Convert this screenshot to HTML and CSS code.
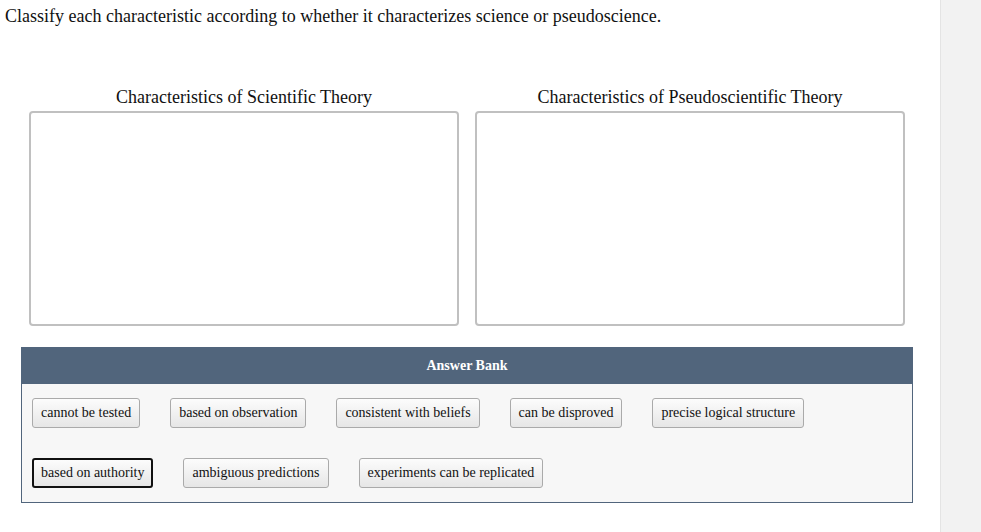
FILE: index.html
```html
<!DOCTYPE html>
<html>
<head>
<meta charset="utf-8">
<link rel="stylesheet" href="styles.css">
</head>
<body>
<div class="page">
  <div class="main">
    <p class="prompt">Classify each characteristic according to whether it characterizes science or pseudoscience.</p>
    <div class="bins">
      <div class="bin">
        <div class="bin-title">Characteristics of Scientific Theory</div>
        <div class="bin-box"></div>
      </div>
      <div class="bin">
        <div class="bin-title">Characteristics of Pseudoscientific Theory</div>
        <div class="bin-box"></div>
      </div>
    </div>
    <div class="bank">
      <div class="bank-head">Answer Bank</div>
      <div class="bank-body">
        <div class="row">
          <span class="chip">cannot be tested</span>
          <span class="chip">based on observation</span>
          <span class="chip">consistent with beliefs</span>
          <span class="chip">can be disproved</span>
          <span class="chip">precise logical structure</span>
        </div>
        <div class="row">
          <span class="chip focus">based on authority</span>
          <span class="chip">ambiguous predictions</span>
          <span class="chip">experiments can be replicated</span>
        </div>
      </div>
    </div>
  </div>
  <div class="side"></div>
</div>
</body>
</html>
```
FILE: styles.css
```css
html, body {
  margin: 0;
  padding: 0;
  background: #fff;
  font-family: "Liberation Serif", "Times New Roman", serif;
  color: #111;
}
.page {
  display: flex;
  height: 532px;
}
.main {
  width: 940px;
  flex: none;
}
.side {
  flex: 1;
  background: #f2f2f2;
  border-left: 1px solid #e4e4e4;
}
.prompt {
  margin: 0;
  padding: 6px 0 0 5px;
  font-size: 18px;
  line-height: 21px;
}
.bins {
  display: flex;
  gap: 16px;
  padding: 59px 0 0 29px;
}
.bin {
  width: 430px;
}
.bin-title {
  text-align: center;
  font-size: 18px;
  line-height: 22px;
  margin-bottom: 3px;
}
.bin-box {
  height: 211px;
  border: 2px solid #c0c0c0;
  border-radius: 4px;
}
.bank {
  margin: 21px 0 0 21px;
  width: 892px;
  border: 1px solid #51657c;
  box-sizing: border-box;
}
.bank-head {
  background: #51657c;
  color: #fff;
  font-weight: bold;
  font-size: 14px;
  text-align: center;
  height: 36px;
  line-height: 36px;
}
.bank-body {
  background: #f7f7f7;
  padding: 14px 0 14px 10px;
  display: flex;
  flex-direction: column;
  gap: 30px;
}
.row {
  display: flex;
  gap: 30px;
}
.chip {
  display: inline-block;
  height: 30px;
  line-height: 27px;
  box-sizing: border-box;
  padding: 0 8px;
  font-size: 14px;
  border: 1px solid #aaa;
  border-radius: 3px;
  background: linear-gradient(#fcfcfc, #e6e6e6);
  color: #111;
  white-space: nowrap;
}
.chip.focus {
  border: 2px solid #111;
  line-height: 25px;
  padding: 0 7px;
}
```
